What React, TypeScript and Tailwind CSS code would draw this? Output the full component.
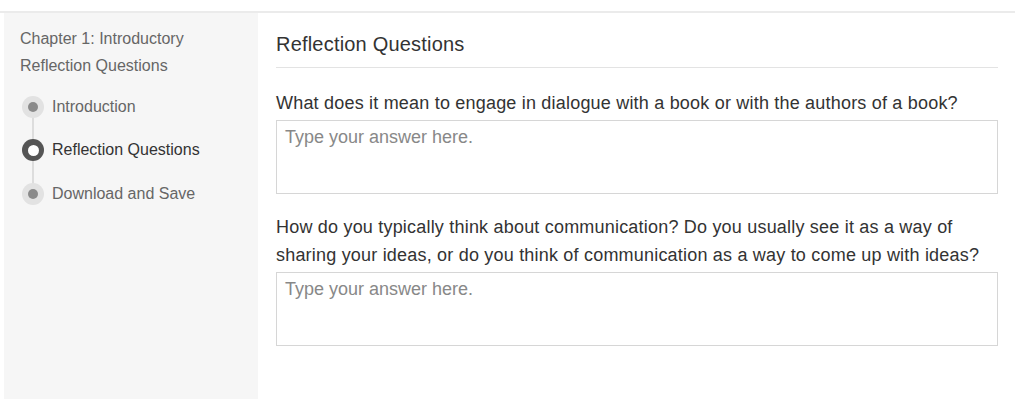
import React from 'react'

type Step = { label: string; state: 'done' | 'active' | 'todo' }

const steps: Step[] = [
  { label: 'Introduction', state: 'done' },
  { label: 'Reflection Questions', state: 'active' },
  { label: 'Download and Save', state: 'todo' },
]

const questions = [
  'What does it mean to engage in dialogue with a book or with the authors of a book?',
  'How do you typically think about communication? Do you usually see it as a way of sharing your ideas, or do you think of communication as a way to come up with ideas?',
]

const StepDot = ({ state }: { state: Step['state'] }) => {
  if (state === 'active') {
    return (
      <div className="relative z-10 flex h-[22px] w-[22px] items-center justify-center rounded-full bg-[#555555]">
        <div className="h-[11px] w-[11px] rounded-full bg-white" />
      </div>
    )
  }
  return (
    <div className="relative z-10 flex h-[22px] w-[22px] items-center justify-center rounded-full bg-[#e2e2e2]">
      <div className="h-[10px] w-[10px] rounded-full bg-[#8a8a8a]" />
    </div>
  )
}

const Sidebar = () => (
  <div className="ml-[4px] h-[386px] w-[254px] shrink-0 bg-[#f6f6f6] pl-[16px] pt-[12px]">
    <div className="text-[16px] leading-[27px] text-[#666666]">
      Chapter 1: Introductory
      <br />
      Reflection Questions
    </div>
    <div className="relative mt-[6px]">
      <div className="absolute left-[12px] top-[14px] h-[86px] w-[2px] bg-[#dddddd]" />
      {steps.map((step) => (
        <div key={step.label} className="flex h-[43.5px] items-center gap-[8px] pl-[2px]">
          <StepDot state={step.state} />
          <span className={'text-[16px] ' + (step.state === 'active' ? 'text-[#333333]' : 'text-[#666666]')}>
            {step.label}
          </span>
        </div>
      ))}
    </div>
  </div>
)

const Question = ({ text }: { text: string }) => (
  <div className="mb-[19px]">
    <label className="block text-[18px] leading-[28px] tracking-[0.2px] text-[#333333]">{text}</label>
    <textarea
      placeholder="Type your answer here."
      className="mt-[3px] block h-[74px] w-full resize-none border border-[#d6d6d6] bg-white px-[8px] py-[3px] text-[18px] leading-[26px] text-[#333333] outline-none placeholder:text-[#888888]"
    />
  </div>
)

export default function App() {
  return (
    <div className="h-[399px] w-[1024px] overflow-hidden bg-white font-['Liberation_Sans',Arial,sans-serif]">
      <div className="mt-[11px] mr-[9px] h-[2px] bg-[#ebebeb]" />
      <div className="flex">
        <Sidebar />
        <div className="flex-1 pl-[18px] pr-[26px]">
          <div className="border-b border-[#e3e3e3] pb-[8px] pt-[16px]">
            <h1 className="text-[20px] leading-[30px] tracking-[0.2px] text-[#333333]">Reflection Questions</h1>
          </div>
          <div className="pt-[21px]">
            {questions.map((q) => (
              <Question key={q} text={q} />
            ))}
          </div>
        </div>
      </div>
    </div>
  )
}
